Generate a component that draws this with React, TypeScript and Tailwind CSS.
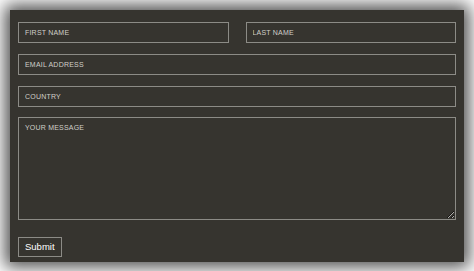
import React from 'react';

const field =
  'h-[21px] w-full min-w-0 border-[1.5px] border-[#8c8b86] bg-[#36342f] px-[6px] text-[7px] uppercase tracking-[0.2px] text-[#d6d5cf] outline-none placeholder:text-[#d0cfc9]';

export default function App() {
  return (
    <div className="h-[271px] w-[474px] bg-white p-[10px]" style={{ fontFamily: '"Liberation Sans", Arial, sans-serif' }}>
      <form className="flex h-[252px] flex-col bg-[#36342f] px-[8px] pb-[9px] pt-[12px] shadow-[0_0_16px_5px_rgba(0,0,0,0.7)]">
        <div className="flex shrink-0 gap-[17px]">
          <input className={`${field} flex-1`} placeholder="FIRST NAME" />
          <input className={`${field} flex-1`} placeholder="LAST NAME" />
        </div>
        <input className={`${field} mt-[11px] shrink-0`} placeholder="EMAIL ADDRESS" />
        <input className={`${field} mt-[11px] shrink-0`} placeholder="COUNTRY" />
        <textarea
          className={`${field} mt-[10px] h-[103px] shrink-0 resize-y pt-[5px]`}
          placeholder="YOUR MESSAGE"
        />
        <div className="mt-[13px] shrink-0">
          <button
            type="button"
            className="h-[20px] border-[1.5px] border-[#8c8b86] bg-[#36342f] px-[6px] text-[9.5px] text-white"
          >
            Submit
          </button>
        </div>
      </form>
    </div>
  );
}
